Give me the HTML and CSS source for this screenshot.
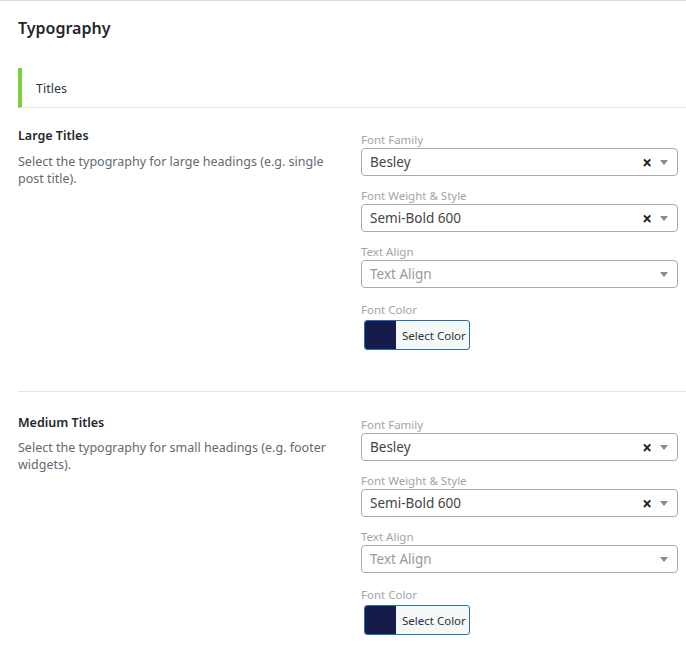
FILE: index.html
```html
<!DOCTYPE html>
<html>
<head>
<meta charset="utf-8">
<link rel="stylesheet" href="styles.css">
</head>
<body>
<div class="panel">
  <h2 class="panel-title">Typography</h2>
  <div class="tab-head"><span>Titles</span></div>

  <div class="row">
    <div class="info">
      <h3 class="info-title">Large Titles</h3>
      <p class="info-desc">Select the typography for large headings (e.g. single post title).</p>
    </div>
    <div class="fields">
      <div class="field">
        <div class="label">Font Family</div>
        <div class="select"><span class="value">Besley</span><span class="clear">×</span><span class="arrow"></span></div>
      </div>
      <div class="field">
        <div class="label">Font Weight &amp; Style</div>
        <div class="select"><span class="value">Semi-Bold 600</span><span class="clear">×</span><span class="arrow"></span></div>
      </div>
      <div class="field">
        <div class="label">Text Align</div>
        <div class="select"><span class="value placeholder">Text Align</span><span class="arrow"></span></div>
      </div>
      <div class="field field-color">
        <div class="label">Font Color</div>
        <div class="color-btn"><span class="swatch"></span><span class="color-text">Select Color</span></div>
      </div>
    </div>
  </div>

  <div class="row">
    <div class="info">
      <h3 class="info-title">Medium Titles</h3>
      <p class="info-desc">Select the typography for small headings (e.g. footer widgets).</p>
    </div>
    <div class="fields">
      <div class="field">
        <div class="label">Font Family</div>
        <div class="select"><span class="value">Besley</span><span class="clear">×</span><span class="arrow"></span></div>
      </div>
      <div class="field">
        <div class="label">Font Weight &amp; Style</div>
        <div class="select"><span class="value">Semi-Bold 600</span><span class="clear">×</span><span class="arrow"></span></div>
      </div>
      <div class="field">
        <div class="label">Text Align</div>
        <div class="select"><span class="value placeholder">Text Align</span><span class="arrow"></span></div>
      </div>
      <div class="field field-color">
        <div class="label">Font Color</div>
        <div class="color-btn"><span class="swatch"></span><span class="color-text">Select Color</span></div>
      </div>
    </div>
  </div>
</div>
</body>
</html>
```
FILE: styles.css
```css
html, body {
  margin: 0;
  padding: 0;
  background: #ffffff;
}
body {
  font-family: "Noto Sans", "Open Sans", sans-serif;
  color: #23282d;
  width: 686px;
}
.panel {
  border-top: 1px solid #dcdcde;
  padding-left: 18px;
}
.panel-title {
  margin: 0;
  padding-top: 16px;
  font-size: 16px;
  line-height: 22px;
  font-weight: 600;
  color: #23282d;
}
.tab-head {
  margin-top: 29px;
  border-left: 4px solid #7ad03a;
  border-bottom: 1px solid #e5e5e5;
  display: flex;
  align-items: center;
  padding-left: 14px;
  padding-top: 1px;
  box-sizing: border-box;
  height: 40px;
  font-size: 12.5px;
  color: #32373c;
}
.row {
  display: flex;
  padding-top: 19px;
  padding-bottom: 41px;
  border-bottom: 1px solid #e5e5e5;
}
.row + .row .info {
  padding-top: 3px;
}
.row + .row .info-desc {
  margin-top: 7px;
}
.row + .row .fields {
  padding-top: 6px;
}
.row:last-child {
  border-bottom: none;
}
.info {
  width: 343px;
  flex: none;
}
.info-title {
  margin: 0;
  font-size: 12.5px;
  line-height: 18px;
  font-weight: 600;
  color: #23282d;
}
.info-desc {
  margin: 8px 0 0;
  font-size: 12.5px;
  line-height: 17px;
  color: #646970;
  width: 310px;
}
.fields {
  width: 317px;
  padding-top: 5px;
}
.field {
  margin-bottom: 12px;
}
.field-color {
  margin-top: 14px;
  margin-bottom: 0;
}
.label {
  font-size: 11.5px;
  line-height: 16px;
  color: #a0a5aa;
}
.select {
  height: 26px;
  border: 1px solid #aaaaaa;
  border-radius: 4px;
  display: flex;
  align-items: center;
  padding: 0 9px 0 8px;
}
.value {
  flex: 1;
  font-size: 13.5px;
  color: #444444;
}
.value.placeholder {
  color: #999999;
}
.clear {
  font-size: 17px;
  font-weight: 700;
  color: #222222;
  margin-right: 8px;
  line-height: 1;
}
.arrow {
  width: 0;
  height: 0;
  border-left: 4px solid transparent;
  border-right: 4px solid transparent;
  border-top: 5px solid #888888;
}
.color-btn {
  margin: 2px 0 0 3px;
  width: 104px;
  height: 28px;
  border: 1px solid #2271b1;
  border-radius: 3px;
  background: #f6f7f7;
  display: flex;
  align-items: stretch;
  overflow: hidden;
}
.swatch {
  width: 31px;
  background: #161b4b;
  flex: none;
}
.color-text {
  display: flex;
  align-items: center;
  padding-left: 6px;
  font-size: 11.5px;
  color: #2c3338;
}
```
